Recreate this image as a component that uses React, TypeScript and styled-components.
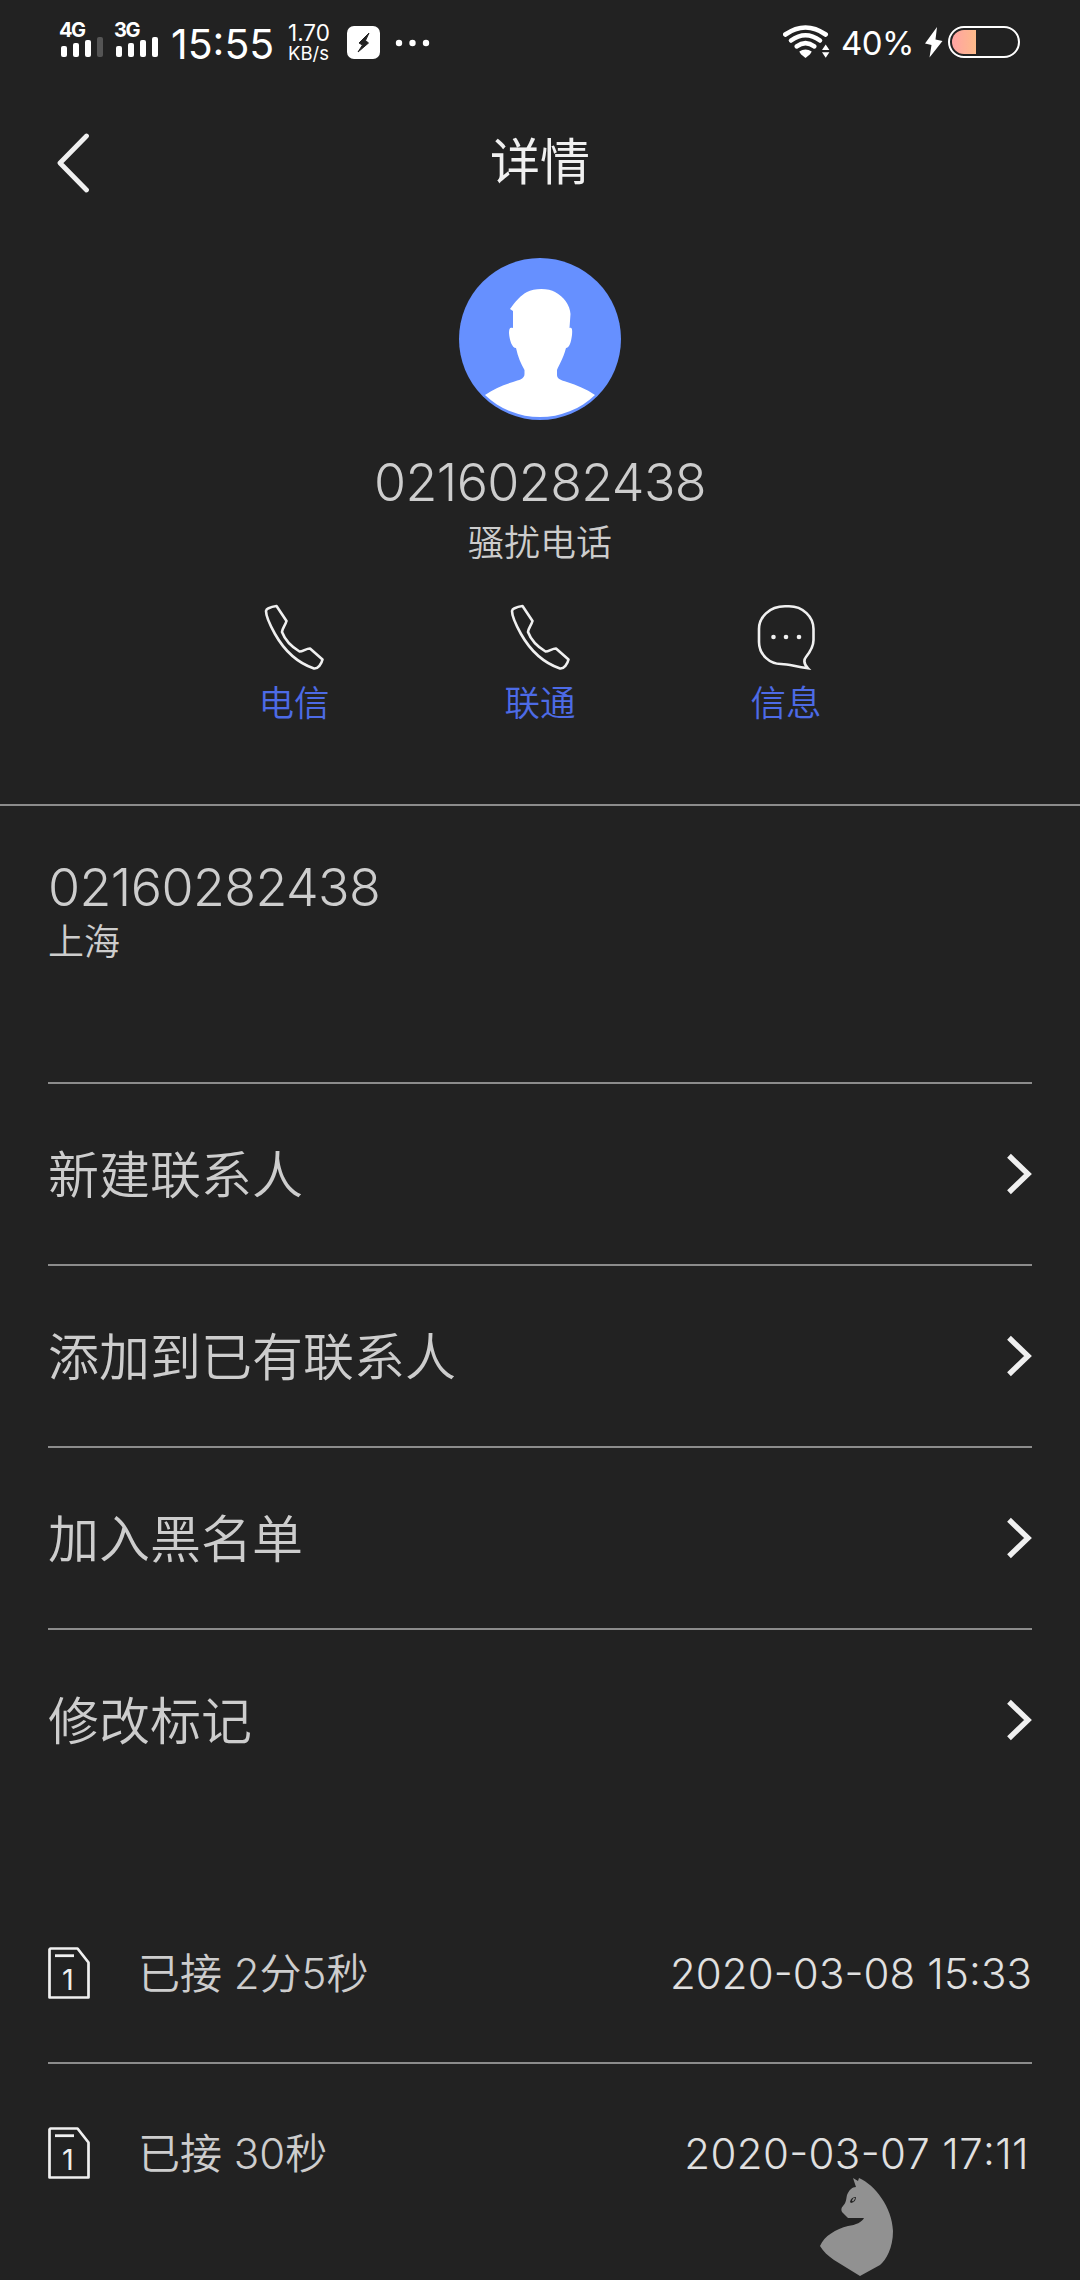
import React from "react";
import styled, { createGlobalStyle } from "styled-components";

const GlobalStyle = createGlobalStyle`
  html, body { margin: 0; padding: 0; background: #222222; }
  * { box-sizing: border-box; }
`;

const Screen = styled.div`
  width: 1080px;
  height: 2280px;
  overflow: hidden;
  display: flex;
  flex-direction: column;
  background: #222222;
  color: #cdcdcd;
  font-family: Inter, "Noto Sans CJK SC", sans-serif;
  font-weight: 350;
  position: relative;
`;

const StatusBar = styled.header`
  height: 90px;
  flex: none;
  display: flex;
  justify-content: space-between;
  align-items: flex-start;
  padding: 0 60px;
  color: #ffffff;
`;

const StatusGroup = styled.div`
  display: flex;
  align-items: flex-start;
`;

const Signal = styled.div`
  width: 55px;
  padding-top: 20px;
  display: flex;
  flex-direction: column;
`;

const SignalLabel = styled.span`
  font-size: 20px;
  line-height: 20px;
  font-weight: 700;
  letter-spacing: -1.5px;
  height: 17px;
  margin-left: -1px;
`;

const Bars = styled.div`
  display: flex;
  align-items: flex-end;
  gap: 6px;
  height: 20px;
  padding-left: 1px;
`;

const Bar = styled.i<{ $h: number; $dim?: boolean }>`
  width: 6px;
  height: ${(p) => p.$h}px;
  border-radius: 2px;
  background: ${(p) => (p.$dim ? "#555555" : "#ffffff")};
`;

const Clock = styled.span`
  font-size: 41px;
  line-height: 50px;
  font-weight: 400;
  width: 118px;
  padding: 19px 0 0 1px;
`;

const Rate = styled.div`
  width: 59px;
  padding-top: 23px;
  display: flex;
  flex-direction: column;
  font-weight: 400;
`;

const RateLine = styled.span<{ $size: number }>`
  font-size: ${(p) => p.$size}px;
  line-height: 20px;
  height: 20px;
  white-space: nowrap;
`;

const StatusIcon = styled.svg`
  display: block;
  flex: none;
`;

const Percent = styled.span`
  font-size: 33px;
  line-height: 40px;
  font-weight: 400;
  letter-spacing: -0.6px;
  padding-top: 23px;
  width: 84px;
`;

const NavBar = styled.nav`
  height: 144px;
  flex: none;
  display: grid;
  grid-template-columns: 1fr auto 1fr;
  align-items: center;
  padding: 1px 56px 0;
`;

const Title = styled.h1`
  margin: 0;
  padding-bottom: 2px;
  font-size: 50px;
  line-height: 60px;
  font-weight: 400;
  color: #f0f0f0;
`;

const Profile = styled.section`
  height: 572px;
  flex: none;
  display: flex;
  flex-direction: column;
  align-items: center;
  padding-top: 24px;
  border-bottom: 2px solid #8c8c8c;
`;

const Avatar = styled.svg`
  display: block;
  width: 162px;
  height: 162px;
`;

const PhoneNumber = styled.div`
  font-size: 52px;
  line-height: 64px;
  letter-spacing: -0.6px;
  white-space: nowrap;
`;

const ProfileNumber = styled(PhoneNumber)`
  margin-top: 31px;
`;

const Tag = styled.div`
  margin-top: 6px;
  font-size: 36px;
  line-height: 44px;
`;

const Actions = styled.div`
  margin-top: 39px;
  display: grid;
  grid-template-columns: repeat(3, 246px);
`;

const Action = styled.button`
  all: unset;
  display: flex;
  flex-direction: column;
  align-items: center;
  gap: 12px;
  color: #4d6be6;
  font-size: 35.5px;
  line-height: 44px;
`;

const Content = styled.main`
  padding: 0 48px;
  display: flex;
  flex-direction: column;
`;

const Location = styled.section`
  height: 278px;
  padding-top: 50px;
  border-bottom: 2px solid #8c8c8c;
`;

const City = styled.div`
  font-size: 36px;
  line-height: 44px;
`;

const Menu = styled.ul`
  list-style: none;
  margin: 0 0 72px;
  padding: 0;
`;

const MenuRow = styled.li<{ $last?: boolean }>`
  height: 182px;
  display: flex;
  align-items: center;
  justify-content: space-between;
  font-size: 51px;
  line-height: 60px;
  border-bottom: 2px solid ${(p) => (p.$last ? "transparent" : "#8c8c8c")};
`;

const MenuLabel = styled.span`
  padding-top: 4px;
`;

const CallRow = styled.div<{ $last?: boolean }>`
  height: 180px;
  display: flex;
  align-items: center;
  font-size: 42px;
  line-height: 50px;
  border-bottom: 2px solid ${(p) => (p.$last ? "transparent" : "#8c8c8c")};
`;

const CallText = styled.span`
  margin-left: 48px;
  padding-top: 2px;
  flex: 1;
`;

const CallDate = styled.time<{ $tracking: number }>`
  color: #e0e0e0;
  padding: 2px ${(p) => (p.$tracking > 0.2 ? 3 : 0)}px 0 0;
  letter-spacing: ${(p) => p.$tracking}px;
  font-feature-settings: "case";
  font-kerning: none;
`;

const SimIcon = styled.svg`
  display: block;
  font-weight: 400;
`;

const Watermark = styled.svg`
  position: absolute;
  left: 820px;
  top: 2178px;
`;

const PhoneIcon = () => (
  <svg width="60" height="66" viewBox="0 0 60 66" fill="none" stroke="#f0f0f0" strokeWidth="2.6" strokeLinejoin="round">
    <path d="M4 4.5Q8 2.5 12.5 2L22.5 17C21 22 18.5 24 18 28C21 36 28 43 35.500 47.500C39 47.500 42 44.500 46 44.500L58.500 55.500C57.500 60 54 65 50 64.500C34 59 20 46 11 30C6 21 2 13 2 7Q2.500 5 4 4.500Z" />
  </svg>
);

const MessageIcon = () => (
  <svg width="60" height="66" viewBox="0 0 60 66" fill="none" stroke="#f0f0f0" strokeWidth="2.6">
    <path d="M29 2.300C13 2.300 3 13.500 3 25V38C3 51 14 60 25 60C34 60 38 62.500 52 64.300C48 60 47.500 56 50 53C54 48 57.500 43 57.500 36V25C57.500 13 47 2.300 33 2.300Z" />
    <g fill="#f0f0f0" stroke="none">
      <circle cx="17.500" cy="33" r="2.300" />
      <circle cx="30" cy="33" r="2.300" />
      <circle cx="43" cy="33" r="2.300" />
    </g>
  </svg>
);

const Chevron = () => (
  <svg width="25" height="42" viewBox="0 0 25 42" fill="none" stroke="#f0f0f0" strokeWidth="5.400">
    <path d="M2 2.800L21 21L2 39.200" />
  </svg>
);

const Sim = () => (
  <SimIcon width="42" height="52" viewBox="0 0 42 52">
    <path d="M2.500 1.500H29.500L40.500 15.500V50.500H1.500V2.500Z" fill="none" stroke="#f0f0f0" strokeWidth="2.700" strokeLinejoin="round" />
    <path d="M7 8.700H26" stroke="#f0f0f0" strokeWidth="2.800" />
    <text x="14" y="42.500" fontSize="29" fill="#f0f0f0">1</text>
  </SimIcon>
);

const MENU = ["新建联系人", "添加到已有联系人", "加入黑名单", "修改标记"];

const CALLS = [
  { text: "已接 2分5秒", date: "2020-03-08 15:33", tracking: 0.1 },
  { text: "已接 30秒", date: "2020-03-07 17:11", tracking: 0.35 },
];

const ACTIONS = [
  { label: "电信", icon: <PhoneIcon /> },
  { label: "联通", icon: <PhoneIcon /> },
  { label: "信息", icon: <MessageIcon /> },
];

export default function App() {
  return (
    <Screen>
      <GlobalStyle />
      <StatusBar>
        <StatusGroup>
          <Signal>
            <SignalLabel>4G</SignalLabel>
            <Bars><Bar $h={11} /><Bar $h={14} /><Bar $h={17} /><Bar $h={20} $dim /></Bars>
          </Signal>
          <Signal>
            <SignalLabel>3G</SignalLabel>
            <Bars><Bar $h={11} /><Bar $h={14} /><Bar $h={17} /><Bar $h={20} /></Bars>
          </Signal>
          <Clock>15:55</Clock>
          <Rate>
            <RateLine $size={22.5}>1.70</RateLine>
            <RateLine $size={18.5}>KB/s</RateLine>
          </Rate>
          <StatusIcon width="84" height="90" viewBox="0 0 84 90">
            <rect x="0" y="26" width="33" height="33" rx="7" fill="#fff" />
            <path d="M22 33L12 43L15.500 45L11 52L21.500 43L18.500 40.500Z" fill="#222" stroke="#222" strokeLinejoin="round" />
            <circle cx="52" cy="43" r="3.200" fill="#fff" />
            <circle cx="65.500" cy="43" r="3.200" fill="#fff" />
            <circle cx="79" cy="43" r="3.200" fill="#fff" />
          </StatusIcon>
        </StatusGroup>
        <StatusGroup>
          <StatusIcon width="58" height="90" viewBox="0 0 58 90">
            <g fill="none" stroke="#fff" strokeWidth="4.600" strokeLinecap="round">
              <path d="M2.300 34.500Q22.500 20.500 42.700 34.500" />
              <path d="M8 40.500Q22.500 30 37 40.500" />
              <path d="M13.700 46.300Q22.500 40 31.300 46.300" />
            </g>
            <path d="M16.300 51.500Q22.500 47.500 28.700 51.500Q28 54 22.500 58Q17 54 16.300 51.500Z" fill="#fff" />
            <path d="M39 50L42.700 44.500L46.400 50ZM39 52.200L42.700 57.700L46.400 52.200Z" fill="#fff" />
          </StatusIcon>
          <Percent>40%</Percent>
          <StatusIcon width="95" height="90" viewBox="0 0 95 90">
            <defs>
              <linearGradient id="charge">
                <stop offset="0" stopColor="#ffa3a3" />
                <stop offset="1" stopColor="#fdba8a" />
              </linearGradient>
            </defs>
            <path d="M12 27L0 43.500L6.500 45L4.500 57.500L17.500 41L10.500 39.500Z" fill="#fff" />
            <rect x="24" y="27" width="70" height="30" rx="15" fill="none" stroke="#fff" strokeWidth="2" />
            <path d="M51 30V54H39A12 12 0 0 1 39 30Z" fill="url(#charge)" />
          </StatusIcon>
        </StatusGroup>
      </StatusBar>

      <NavBar>
        <svg width="36" height="60" viewBox="0 0 36 60" fill="none" stroke="#f0f0f0" strokeWidth="4.800" strokeLinecap="round" strokeLinejoin="round">
          <path d="M30.500 3L4 30L30.500 57" />
        </svg>
        <Title>详情</Title>
      </NavBar>

      <Profile>
        <Avatar viewBox="0 0 162 162">
          <circle cx="81" cy="81" r="81" fill="#6690ff" />
          <path
            fill="#fff"
            d="M51 51C56 44 62 37 68 34C75 30 90 30 96 34C105 39 111 47 111.500 56L110.500 70C113 69 113.500 71 113 77C112 85 110 90 107 90C104 101 100 107 98 112V117C98 121 102 122 108 124C118 127 127 131 136 137A79.500 79.500 0 0 1 26 137C35 131 44 127 54 124C60 122 65.500 121 65.500 116V112C62 106 59 99 57 90C53 90 50.500 82 50 75C50 70 51 69 54 70V53Z"
          />
        </Avatar>
        <ProfileNumber>02160282438</ProfileNumber>
        <Tag>骚扰电话</Tag>
        <Actions>
          {ACTIONS.map((a) => (
            <Action key={a.label}>
              {a.icon}
              <span>{a.label}</span>
            </Action>
          ))}
        </Actions>
      </Profile>

      <Content>
        <Location>
          <PhoneNumber>02160282438</PhoneNumber>
          <City>上海</City>
        </Location>
        <Menu>
          {MENU.map((m, i) => (
            <MenuRow key={m} $last={i === MENU.length - 1}>
              <MenuLabel>{m}</MenuLabel>
              <Chevron />
            </MenuRow>
          ))}
        </Menu>
        {CALLS.map((c, i) => (
          <CallRow key={c.date} $last={i === CALLS.length - 1}>
            <Sim />
            <CallText>{c.text}</CallText>
            <CallDate $tracking={c.tracking}>{c.date}</CallDate>
          </CallRow>
        ))}
      </Content>

      <Watermark width="73" height="98" viewBox="0 0 73 98">
        <path
          fill="#919191"
          d="M33 0L38 3L39 0C55 7 72 29 73 53C73 70 66 82 60 87L40 98L14 82C8 78 3 73 0 68C4 58 16 51 28 48C36 47 42 44 44 40H28L22 34C21 32 21 30 23 28C26 25 26 22 27 17C29 12 32 9 36 9Z"
        />
        <path d="M30 24Q31 19 36 19Q36 24 31 25Z" fill="#222" />
        <path d="M32.500 23L34.500 20" stroke="#919191" strokeWidth="1.500" />
      </Watermark>
    </Screen>
  );
}
